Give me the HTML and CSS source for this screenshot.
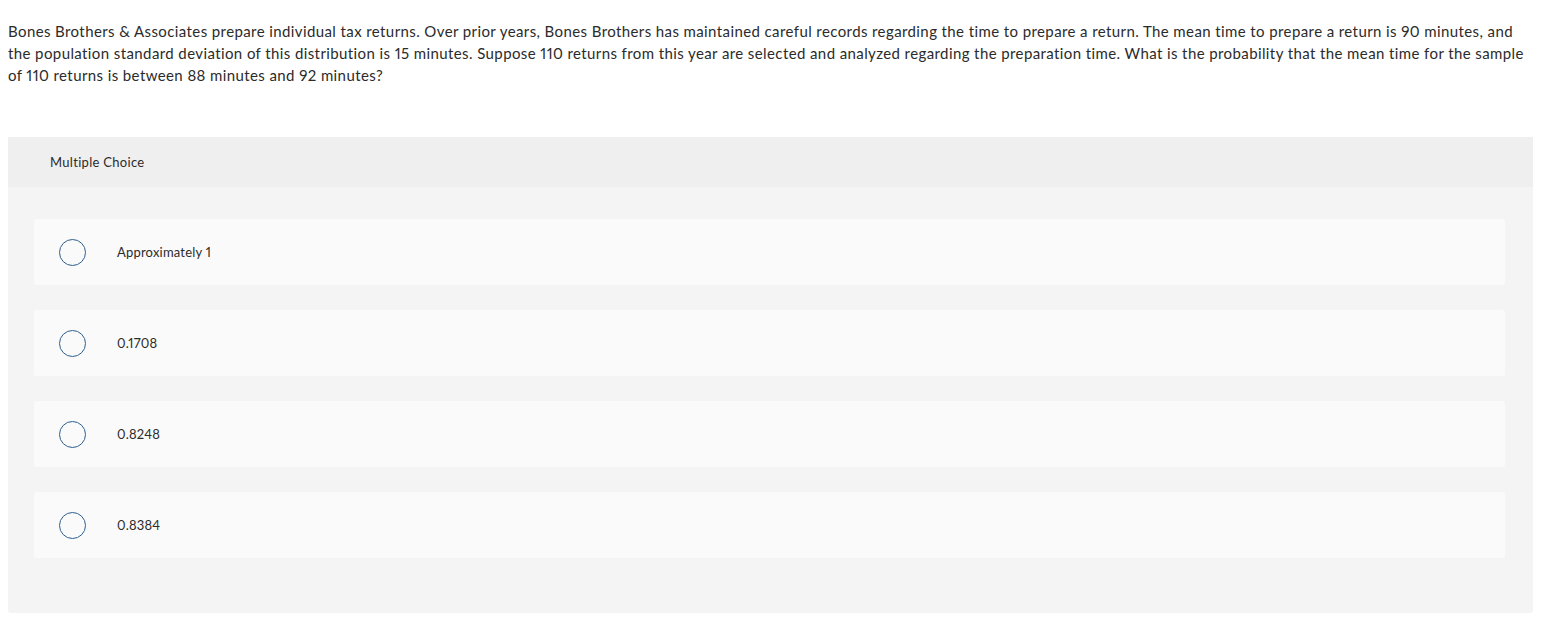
FILE: index.html
```html
<!DOCTYPE html>
<html lang="en">
<head>
<meta charset="utf-8">
<title>Multiple Choice</title>
<link rel="stylesheet" href="styles.css">
</head>
<body>
<p class="prompt">Bones Brothers &amp; Associates prepare individual tax returns. Over prior years, Bones Brothers has maintained careful records regarding the time to prepare a return. The mean time to prepare a return is 90 minutes, and the population standard deviation of this distribution is 15 minutes. Suppose 110 returns from this year are selected and analyzed regarding the preparation time. What is the probability that the mean time for the sample of 110 returns is between 88 minutes and 92 minutes?</p>
<section class="question">
  <header class="question-head">Multiple Choice</header>
  <div class="choices">
    <label class="choice"><span class="radio"></span><span class="choice-text">Approximately 1</span></label>
    <label class="choice"><span class="radio"></span><span class="choice-text">0.1708</span></label>
    <label class="choice"><span class="radio"></span><span class="choice-text">0.8248</span></label>
    <label class="choice"><span class="radio"></span><span class="choice-text">0.8384</span></label>
  </div>
</section>
</body>
</html>
```
FILE: styles.css
```css
body {
  margin: 8px;
  font-family: "Lato", "Open Sans", sans-serif;
  font-variant-numeric: proportional-nums;
  color: #2b2b2b;
  background: #fff;
}
.prompt {
  margin: 12px 0 0;
  font-size: 15px;
  line-height: 22px;
  letter-spacing: 0.4px;
  width: 1525px;
}
.question {
  margin-top: 51px;
  width: 1525px;
  background: #f4f4f4;
  border-radius: 0 0 3px 3px;
  padding-bottom: 55px;
}
.question-head {
  height: 50px;
  background: #efefef;
  padding-left: 42px;
  display: flex;
  align-items: center;
  font-size: 13px;
  letter-spacing: 0.3px;
}
.choices {
  display: flex;
  flex-direction: column;
  gap: 25px;
  padding: 32px 28px 0 26px;
}
.choice {
  display: flex;
  align-items: center;
  height: 66px;
  background: #fafafa;
  border-radius: 3px;
  padding-left: 25px;
  font-size: 13px;
}
.radio {
  width: 25px;
  height: 25px;
  border: 1.5px solid #2e5f8e;
  border-radius: 50%;
  flex: none;
}
.choice-text {
  margin-left: 31px;
  letter-spacing: 0.2px;
}
```
